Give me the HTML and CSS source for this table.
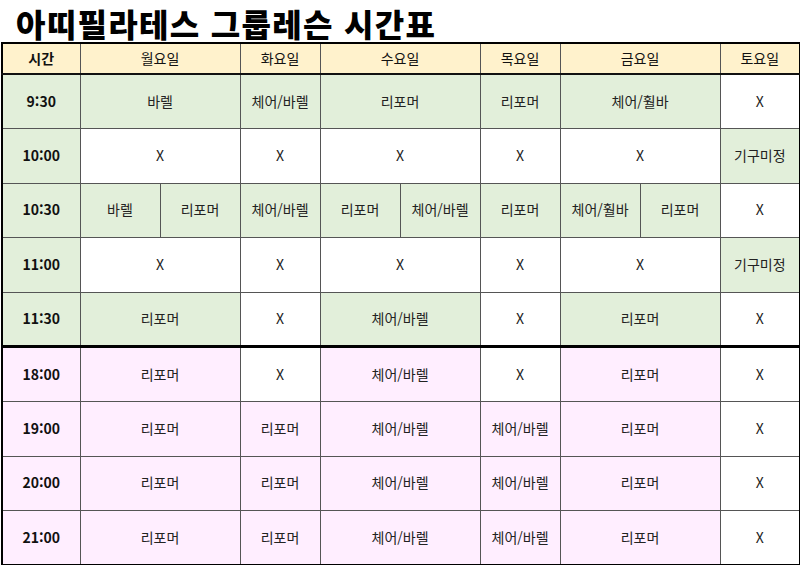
FILE: index.html
```html
<!DOCTYPE html>
<html lang="ko">
<head>
<meta charset="utf-8">
<title>아띠필라테스 그룹레슨 시간표</title>
<link rel="stylesheet" href="styles.css">
</head>
<body>
<h1 class="title">아띠필라테스 그룹레슨 시간표</h1>
<table class="sched">
  <colgroup>
    <col class="c0"><col class="c"><col class="c"><col class="c"><col class="c">
    <col class="c"><col class="c"><col class="c"><col class="c"><col class="c">
  </colgroup>
  <thead>
    <tr class="head">
      <th>시간</th>
      <th colspan="2">월요일</th>
      <th>화요일</th>
      <th colspan="2">수요일</th>
      <th>목요일</th>
      <th colspan="2">금요일</th>
      <th>토요일</th>
    </tr>
  </thead>
  <tbody class="am">
    <tr>
      <th>9:30</th>
      <td colspan="2" class="g">바렐</td>
      <td class="g">체어/바렐</td>
      <td colspan="2" class="g">리포머</td>
      <td class="g">리포머</td>
      <td colspan="2" class="g">체어/훨바</td>
      <td>X</td>
    </tr>
    <tr>
      <th>10:00</th>
      <td colspan="2">X</td>
      <td>X</td>
      <td colspan="2">X</td>
      <td>X</td>
      <td colspan="2">X</td>
      <td class="g">기구미정</td>
    </tr>
    <tr>
      <th>10:30</th>
      <td class="g">바렐</td>
      <td class="g">리포머</td>
      <td class="g">체어/바렐</td>
      <td class="g">리포머</td>
      <td class="g">체어/바렐</td>
      <td class="g">리포머</td>
      <td class="g">체어/훨바</td>
      <td class="g">리포머</td>
      <td>X</td>
    </tr>
    <tr>
      <th>11:00</th>
      <td colspan="2">X</td>
      <td>X</td>
      <td colspan="2">X</td>
      <td>X</td>
      <td colspan="2">X</td>
      <td class="g">기구미정</td>
    </tr>
    <tr class="last">
      <th>11:30</th>
      <td colspan="2" class="g">리포머</td>
      <td>X</td>
      <td colspan="2" class="g">체어/바렐</td>
      <td>X</td>
      <td colspan="2" class="g">리포머</td>
      <td>X</td>
    </tr>
  </tbody>
  <tbody class="pm">
    <tr class="first">
      <th>18:00</th>
      <td colspan="2" class="p">리포머</td>
      <td>X</td>
      <td colspan="2" class="p">체어/바렐</td>
      <td>X</td>
      <td colspan="2" class="p">리포머</td>
      <td>X</td>
    </tr>
    <tr>
      <th>19:00</th>
      <td colspan="2" class="p">리포머</td>
      <td class="p">리포머</td>
      <td colspan="2" class="p">체어/바렐</td>
      <td class="p">체어/바렐</td>
      <td colspan="2" class="p">리포머</td>
      <td>X</td>
    </tr>
    <tr>
      <th>20:00</th>
      <td colspan="2" class="p">리포머</td>
      <td class="p">리포머</td>
      <td colspan="2" class="p">체어/바렐</td>
      <td class="p">체어/바렐</td>
      <td colspan="2" class="p">리포머</td>
      <td>X</td>
    </tr>
    <tr>
      <th>21:00</th>
      <td colspan="2" class="p">리포머</td>
      <td class="p">리포머</td>
      <td colspan="2" class="p">체어/바렐</td>
      <td class="p">체어/바렐</td>
      <td colspan="2" class="p">리포머</td>
      <td>X</td>
    </tr>
  </tbody>
</table>
</body>
</html>
```
FILE: styles.css
```css
html, body {
  margin: 0;
  padding: 0;
  background: #ffffff;
}
body {
  font-family: "Noto Sans CJK KR", "Noto Sans", sans-serif;
  color: #222;
}
.title {
  margin: 0;
  padding: 0 0 0 16px;
  height: 42px;
  line-height: 46px;
  font-size: 32px;
  font-weight: 900;
  color: #000;
  letter-spacing: 1.3px;
  white-space: nowrap;
}
.sched {
  width: 798px;
  margin-left: 1px;
  border-collapse: collapse;
  table-layout: fixed;
  border: 2px solid #000;
}
.c0 { width: 78px; }
.c { width: 80px; }
.sched th, .sched td {
  border: 1px solid #555;
  text-align: center;
  vertical-align: middle;
  padding: 0 0 2px 0;
  font-size: 14px;
  line-height: 18px;
  overflow: hidden;
  white-space: nowrap;
}
.sched td {
  font-weight: 400;
  color: #222;
  background: #ffffff;
}
.sched th {
  font-weight: 700;
  color: #111;
}
.head th {
  background: #fff2cc;
  height: 27px;
  font-weight: 400;
  border-bottom: 2px solid #111;
}
.head th:first-child { font-weight: 700; }
.sched tbody tr { height: 54.6px; }
.am th { background: #e2efda; }
.pm th { background: #ffeeff; }
.sched td.g { background: #e2efda; }
.sched td.p { background: #ffeeff; }
.last th, .last td { border-bottom: 3px solid #000; }
```
